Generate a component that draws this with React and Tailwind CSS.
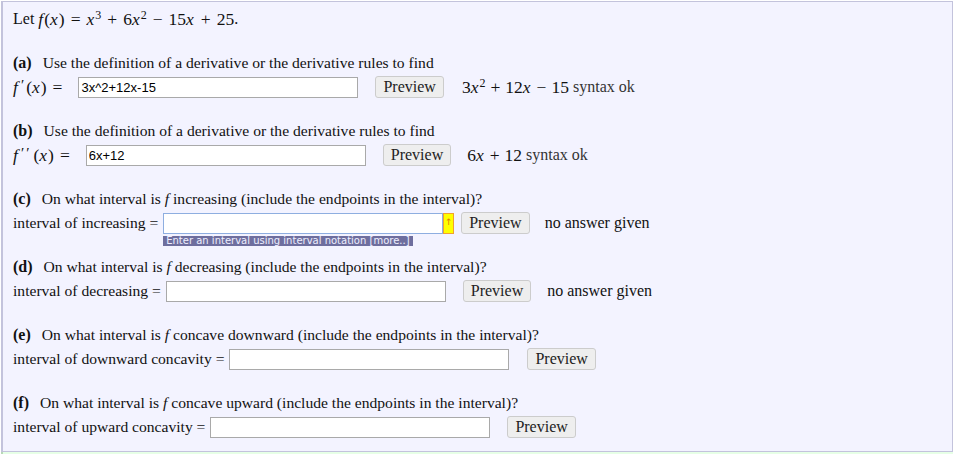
function Preview() {
  return (
    <button className="h-[22px] px-[7px] bg-[#eeeeee] border border-[#cccccc] rounded-[3px] text-[16px] leading-none text-[#222222] font-['Liberation_Serif',serif]">
      Preview
    </button>
  );
}

function Answer({ value = "", focused = false }) {
  return (
    <input
      readOnly
      value={value}
      className={
        "w-[280px] h-[21px] bg-white px-[2px] text-[13px] text-black font-['Liberation_Sans',sans-serif] outline-none border " +
        (focused ? "border-[#8eaee0]" : "border-[#a9a9a9]")
      }
    />
  );
}

// MathJax-ish rendering: slightly larger glyphs, wide operator spacing
function M({ children, className = "" }) {
  return <span className={"inline-flex items-center text-[17.5px] " + className}>{children}</span>;
}

function Op({ children, tight = false }) {
  return <span className={tight ? "mx-[5px]" : "mx-[6px]"}>{children}</span>;
}

function V({ children }) {
  return <i className="pr-[1px]">{children}</i>;
}

function Sup({ children }) {
  return <span className="text-[12px] -mt-[9px]">{children}</span>;
}

function Question({ tag, children }) {
  return (
    <div className="h-[24px] flex items-center">
      <b className="mr-[11px]">({tag})</b>
      <span className="text-[15.6px]">{children}</span>
    </div>
  );
}

export default function App() {
  return (
    <div className="w-[953px] h-[454px] bg-white pt-[1px] overflow-hidden font-['Liberation_Serif',serif] text-[16px] text-[#111111]">
      <div className="ml-[1px] bg-[#f3f3ff] border-t border-l-2 border-r border-b border-[#c3c3dc] pt-[5px] pb-[12px] pl-[10px]">
        <div className="h-[24px] flex items-center">
          <span className="mr-[4px]">Let</span>
          <M>
            <V>f</V>
            <span>(</span>
            <V>x</V>
            <span>)</span>
            <Op>=</Op>
            <V>x</V>
            <Sup>3</Sup>
            <Op>+</Op>
            <span>6</span>
            <V>x</V>
            <Sup>2</Sup>
            <Op>−</Op>
            <span>15</span>
            <V>x</V>
            <Op>+</Op>
            <span>25</span>
          </M>
          <span>.</span>
        </div>

        <div className="mt-[20px]">
          <Question tag="a">Use the definition of a derivative or the derivative rules to find</Question>
          <div className="h-[24px] flex items-center">
            <M>
              <V>f</V>
              <span className="ml-[2px] mr-[2px] text-[15px] -mt-[4px]">′</span>
              <span>(</span>
              <V>x</V>
              <span>)</span>
              <Op>=</Op>
            </M>
            <span className="ml-[10px]"><Answer value="3x^2+12x-15" /></span>
            <span className="ml-[17px]"><Preview /></span>
            <span className="ml-[18px] flex items-center">
              <M>
                <span>3</span>
                <V>x</V>
                <Sup>2</Sup>
                <Op tight>+</Op>
                <span>12</span>
                <V>x</V>
                <Op tight>−</Op>
                <span>15</span>
              </M>
              <span className="ml-[4px] text-[#333333]">syntax ok</span>
            </span>
          </div>
        </div>

        <div className="mt-[20px]">
          <Question tag="b">Use the definition of a derivative or the derivative rules to find</Question>
          <div className="h-[24px] flex items-center">
            <M>
              <V>f</V>
              <span className="ml-[2px] mr-[2px] text-[15px] -mt-[4px] tracking-[2px]">′′</span>
              <span>(</span>
              <V>x</V>
              <span>)</span>
              <Op>=</Op>
            </M>
            <span className="ml-[10px]"><Answer value="6x+12" /></span>
            <span className="ml-[17px]"><Preview /></span>
            <span className="ml-[16px] flex items-center">
              <M>
                <span>6</span>
                <V>x</V>
                <Op tight>+</Op>
                <span>12</span>
              </M>
              <span className="ml-[4px] text-[#333333]">syntax ok</span>
            </span>
          </div>
        </div>

        <div className="mt-[20px]">
          <Question tag="c">
            On what interval is <i>f</i> increasing (include the endpoints in the interval)?
          </Question>
          <div className="h-[24px] flex items-center">
            <span className="mr-[5px] text-[15.6px]">interval of increasing =</span>
            <div className="relative flex">
              <Answer focused />
              <span className="w-[11px] h-[21px] bg-[#ffff00] border border-[#f0a030] flex items-center justify-center text-[9px] text-[#e08000] font-['DejaVu_Sans',sans-serif]">
                ↑
              </span>
              <div className="absolute left-0 top-[23px] h-[10px] px-[3px] bg-[#6e6e9e] text-[#eeeeff] text-[10px] leading-[10px] whitespace-nowrap font-['DejaVu_Sans',sans-serif]">
                Enter an interval using interval notation [more..]
              </div>
            </div>
            <span className="ml-[7px]"><Preview /></span>
            <span className="ml-[15px]">no answer given</span>
          </div>
        </div>

        <div className="mt-[20px]">
          <Question tag="d">
            On what interval is <i>f</i> decreasing (include the endpoints in the interval)?
          </Question>
          <div className="h-[24px] flex items-center">
            <span className="mr-[5px] text-[15.6px]">interval of decreasing =</span>
            <Answer />
            <span className="ml-[17px]"><Preview /></span>
            <span className="ml-[16px]">no answer given</span>
          </div>
        </div>

        <div className="mt-[20px]">
          <Question tag="e">
            On what interval is <i>f</i> concave downward (include the endpoints in the interval)?
          </Question>
          <div className="h-[24px] flex items-center">
            <span className="mr-[5px] text-[15.6px]">interval of downward concavity =</span>
            <Answer />
            <span className="ml-[18px]"><Preview /></span>
          </div>
        </div>

        <div className="mt-[20px]">
          <Question tag="f">
            On what interval is <i>f</i> concave upward (include the endpoints in the interval)?
          </Question>
          <div className="h-[24px] flex items-center">
            <span className="mr-[5px] text-[15.6px]">interval of upward concavity =</span>
            <Answer />
            <span className="ml-[17px]"><Preview /></span>
          </div>
        </div>
      </div>
      <div className="ml-[1px] h-[10px] bg-[#e6ffe6] border-l-2 border-[#b8d8b8]" />
    </div>
  );
}
